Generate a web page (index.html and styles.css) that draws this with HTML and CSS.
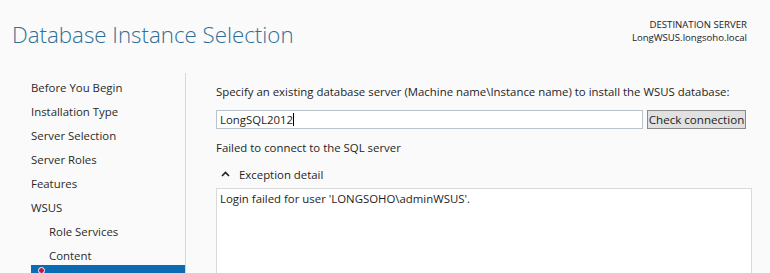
FILE: index.html
```html
<!DOCTYPE html>
<html lang="en">
<head>
    <meta charset="UTF-8">
    <title>Database Instance Selection</title>
    <link rel="stylesheet" href="styles.css">
</head>
<body>
    <div id="wizard">
        <div class="header">
            <h1>Database Instance Selection</h1>
            <div class="destServer">
                <div>DESTINATION SERVER</div>
                <div>LongWSUS.longsoho.local</div>
            </div>
        </div>
        <div class="main">
            <ul class="steps">
                <li>Before You Begin</li>
                <li>Installation Type</li>
                <li>Server Selection</li>
                <li>Server Roles</li>
                <li>Features</li>
                <li>WSUS</li>
                <li class="sub">Role Services</li>
                <li class="sub">Content</li>
                <li class="current"><span class="errDot"></span></li>
            </ul>
            <div class="content">
                <p class="prompt">Specify an existing database server (Machine name\Instance name) to install the WSUS database:</p>
                <div class="serverRow">
                    <div class="serverInput">LongSQL2012<span class="caret"></span></div>
                    <button class="checkBtn">Check connection</button>
                </div>
                <p class="status">Failed to connect to the SQL server</p>
                <div class="detailToggle">
                    <svg width="9" height="6" viewBox="0 0 9 6"><path d="M1 5 L4.5 1.5 L8 5" fill="none" stroke="#222" stroke-width="1.6"/></svg>
                    <span>Exception detail</span>
                </div>
                <div class="detailBox">Login failed for user 'LONGSOHO\adminWSUS'.</div>
            </div>
        </div>
    </div>
</body>
</html>
```

FILE: styles.css
```css
body {
    margin: 0;
    padding: 0;
    background: #fafafa;
    font-family: "Open Sans", "Noto Sans", sans-serif;
    font-size: 11.4px;
    color: #1e1e1e;
    overflow: hidden;
}

#wizard {
    width: 770px;
    height: 273px;
    overflow: hidden;
}

.header {
    display: flex;
    justify-content: space-between;
    height: 73px;
}

h1 {
    margin: 19px 0 0 12px;
    font-size: 22.3px;
    font-weight: 300;
    color: #2e6f96;
}

.destServer {
    margin: 18px 23px 0 0;
    text-align: right;
    font-size: 9.6px;
    line-height: 13px;
    color: #222;
}

.main {
    display: flex;
}

.steps {
    list-style: none;
    margin: 0;
    padding: 6px 0 0 31px;
    width: 154px;
    height: 200px;
    border-right: 1px solid #d6d6d6;
}

.steps li {
    height: 24px;
    line-height: 18px;
    color: #2a2a2a;
}

.steps li.sub {
    padding-left: 18px;
}

.steps li.current {
    background: #0b6cb5;
    margin-top: -6px;
    padding-left: 7px;
}

.errDot {
    display: inline-block;
    width: 5px;
    height: 5px;
    margin-top: 2px;
    border-radius: 50%;
    background: #c0183a;
    border: 1px solid #fff;
    vertical-align: top;
}

.content {
    padding-left: 30px;
    flex: 1;
}

.prompt {
    margin: 10px 0 0;
    line-height: 18px;
}

.serverRow {
    display: flex;
    margin-top: 9px;
}

.serverInput {
    width: 422px;
    height: 17px;
    line-height: 17px;
    padding-left: 3px;
    background: #fff;
    border: 1px solid #b9c3cc;
}

.caret {
    display: inline-block;
    width: 1px;
    height: 13px;
    vertical-align: -2px;
    background: #000;
}

.checkBtn {
    margin-left: 4px;
    width: 99px;
    height: 19px;
    padding: 0;
    white-space: nowrap;
    font-family: inherit;
    font-size: 11.6px;
    background: #e1e1e1;
    border: 1px solid #8a8a8a;
    color: #1e1e1e;
}

.status {
    margin: 10px 0 0;
    line-height: 18px;
}

.detailToggle {
    display: flex;
    align-items: center;
    gap: 9px;
    margin: 8px 0 0 5px;
    height: 18px;
}

.detailBox {
    margin-top: 5px;
    width: 528px;
    height: 90px;
    padding: 1px 3px;
    background: #fff;
    border: 1px solid #d9d9d9;
    line-height: 18px;
}
```
